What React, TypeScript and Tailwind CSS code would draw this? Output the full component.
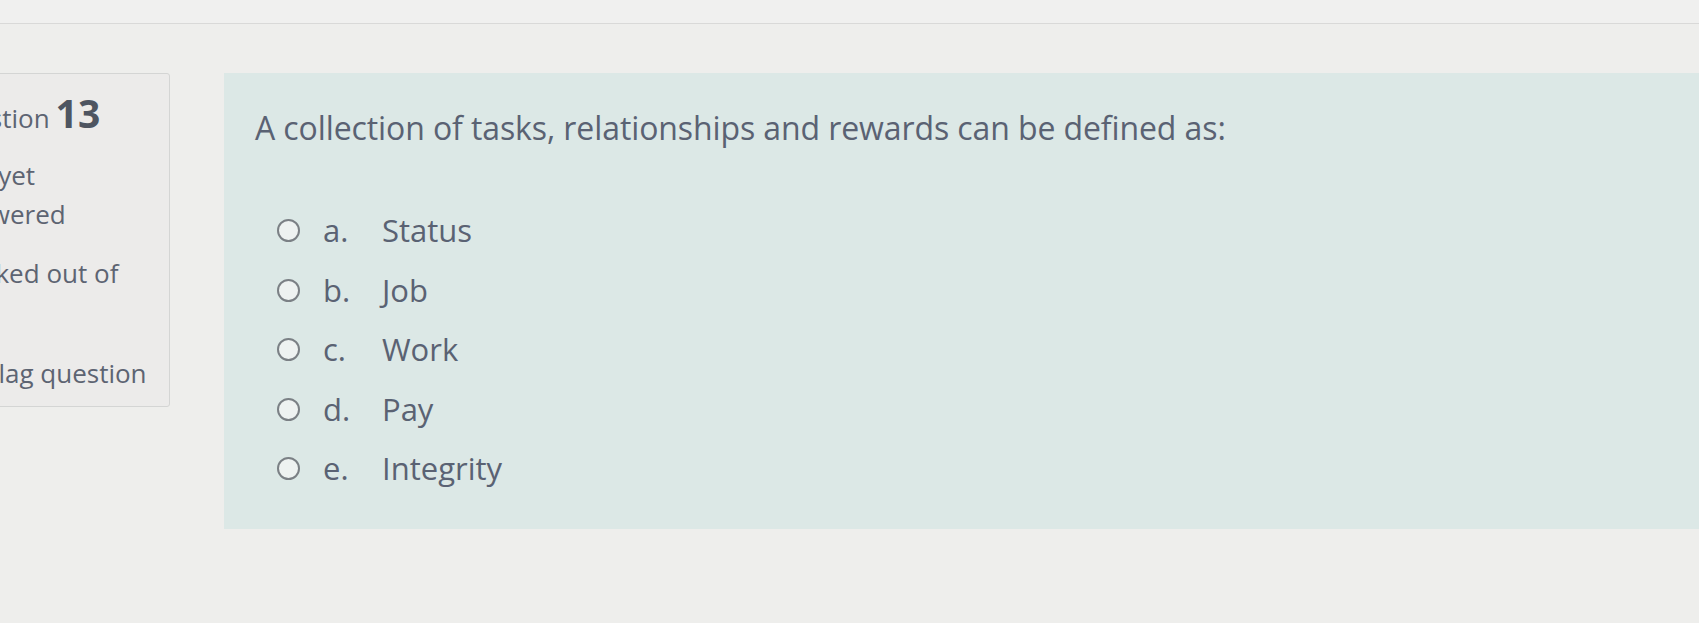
import { Flag } from "lucide-react";

// ─── Data ─────────────────────────────────────────────────────────────────────

const options = [
  { key: "a.", label: "Status" },
  { key: "b.", label: "Job" },
  { key: "c.", label: "Work" },
  { key: "d.", label: "Pay" },
  { key: "e.", label: "Integrity" },
];

// ─── Question info box ────────────────────────────────────────────────────────

const InfoBox = () => (
  <div className="ml-[-80px] h-[334px] w-[250px] shrink-0 rounded-[3px] border border-[#d4d5d4] bg-[#ecebea] pl-[26px] pt-[19px] text-[26px] text-[#5d6472]">
    <h3 className="ml-[-8px] text-[26px] leading-[40px]">
      Question<span className="ml-[6px] text-[39px] font-bold text-[#4e5561]">13</span>
    </h3>
    <div className="mt-[18px] leading-[39px]">
      <p>Not yet</p>
      <p>answered</p>
    </div>
    <div className="mt-[20px] leading-[39px]">
      <p>Marked out of</p>
      <p>1.00</p>
    </div>
    <div className="mt-[22px] flex items-center leading-[39px]">
      <Flag className="mr-[22px] h-4 w-4" />
      <span>Flag question</span>
    </div>
  </div>
);

// ─── Radio option ─────────────────────────────────────────────────────────────

const Option = ({ letter, label }: { letter: string; label: string }) => (
  <label className="flex h-[59.5px] items-center">
    <span className="h-[23px] w-[23px] shrink-0 rounded-full border-[2.5px] border-[#7b8085] bg-[#eef2f1]" />
    <span className="ml-[23px] w-[59px]">{letter}</span>
    <span>{label}</span>
  </label>
);

// ─── Page ─────────────────────────────────────────────────────────────────────

export default function App() {
  return (
    <div
      className="h-[623px] w-[1699px] overflow-hidden bg-[#eeeeec] text-[#5a6273]"
      style={{ fontFamily: '"Open Sans", "Noto Sans", sans-serif' }}
    >
      <div className="h-[24px] border-b border-[#d9d9d8] bg-[#f0f0ef]" />

      <div className="mt-[49px] flex items-start">
        <InfoBox />

        <section className="ml-[54px] h-[456px] flex-1 bg-[#dce8e6] pl-[31px] pt-[35px]">
          <p className="text-[32px] leading-[40px] tracking-[-0.1px]">
            A collection of tasks, relationships and rewards can be defined as:
          </p>

          <div className="mt-[53px] pl-[22px] text-[31px] leading-[59px]">
            {options.map((o) => (
              <Option key={o.key} letter={o.key} label={o.label} />
            ))}
          </div>
        </section>
      </div>
    </div>
  );
}
